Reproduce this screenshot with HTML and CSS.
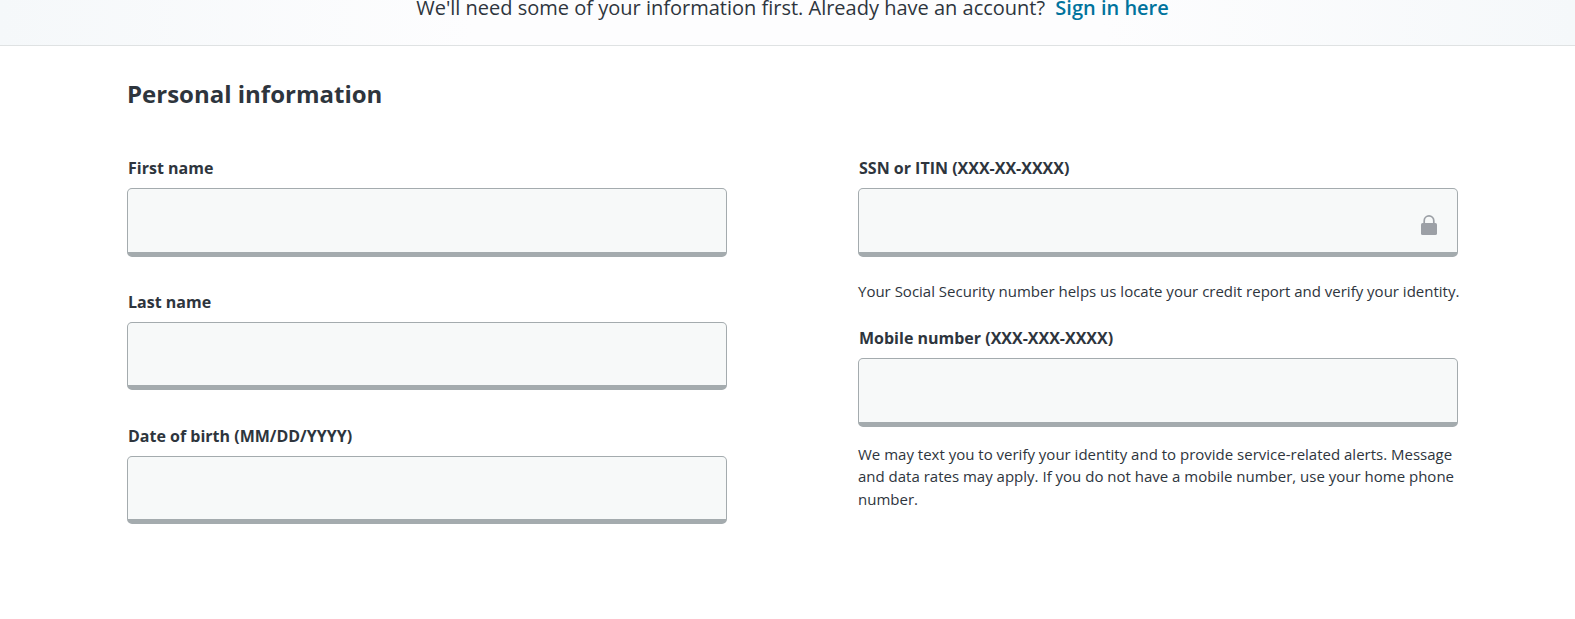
FILE: index.html
```html
<!DOCTYPE html>
<html lang="en">
<head>
  <meta charset="UTF-8" />
  <title>Personal information</title>
  <link rel="stylesheet" href="styles.css">
</head>
<body>
  <div class="banner">
    <p class="banner-text">We'll need some of your information first. Already have an account? <a href="#" class="signin">Sign in here</a></p>
  </div>

  <div class="content">
    <h2 class="section-title">Personal information</h2>

    <div class="columns">
      <div class="column">
        <div class="field">
          <label for="firstName">First name</label>
          <div class="input-wrap"><input type="text" id="firstName"></div>
        </div>
        <div class="field">
          <label for="lastName">Last name</label>
          <div class="input-wrap"><input type="text" id="lastName"></div>
        </div>
        <div class="field">
          <label for="dob">Date of birth (MM/DD/YYYY)</label>
          <div class="input-wrap"><input type="text" id="dob"></div>
        </div>
      </div>

      <div class="column">
        <div class="field field-ssn">
          <label for="ssn">SSN or ITIN (XXX-XX-XXXX)</label>
          <div class="input-wrap">
            <input type="text" id="ssn">
            <svg class="lock" viewBox="0 0 16 20" width="16" height="20" aria-hidden="true">
              <path d="M3.2 10V5.65a4.8 4.8 0 0 1 9.6 0V10" fill="none" stroke="#9ca0a6" stroke-width="1.7"/>
              <rect x="0" y="8" width="16" height="12" rx="1.6" fill="#9ca0a6"/>
            </svg>
          </div>
          <p class="help">Your Social Security number helps us locate your credit report and verify your identity.</p>
        </div>
        <div class="field">
          <label for="mobile">Mobile number (XXX-XXX-XXXX)</label>
          <div class="input-wrap"><input type="text" id="mobile"></div>
          <p class="help help-tight">We may text you to verify your identity and to provide service-related alerts. Message and data rates may apply. If you do not have a mobile number, use your home phone number.</p>
        </div>
      </div>
    </div>
  </div>
</body>
</html>
```

FILE: styles.css
```css
* {
  box-sizing: border-box;
}

body {
  margin: 0;
  font-family: 'Open Sans', sans-serif;
  background: #ffffff;
  color: #2e353d;
  overflow: hidden;
}

.banner {
  height: 46px;
  background: linear-gradient(90deg, #f5f8fa, #fdfdfe 30%, #fdfdfe 70%, #f5f8fa);
  border-bottom: 1px solid #dfe2e3;
  text-align: center;
}

.banner-text {
  margin: 0;
  padding-left: 10px;
  font-size: 20px;
  font-weight: 400;
  line-height: 15px;
}

.signin {
  margin-left: 5px;
  color: #00739d;
  font-weight: 600;
  text-decoration: none;
}

.content {
  padding: 30px 0 0 127px;
}

.section-title {
  margin: 0 0 44.9px;
  font-size: 24px;
  font-weight: 700;
  line-height: 36px;
}

.columns {
  display: grid;
  grid-template-columns: 600px 600px;
  column-gap: 131px;
}

.field {
  margin-bottom: 34.15px;
}

label {
  display: block;
  margin: 0 0 9px 1px;
  font-size: 16px;
  font-weight: 700;
  line-height: 22px;
}

.input-wrap {
  position: relative;
}

input {
  display: block;
  width: 100%;
  height: 68.7px;
  background: #f7f9f9;
  border: 1px solid #a4abae;
  border-bottom-width: 5px;
  border-radius: 5px;
}

.lock {
  position: absolute;
  right: 21px;
  top: 27px;
}

.help {
  margin: 23px -6px 0 0;
  font-size: 15px;
  line-height: 22.5px;
}

.help-tight {
  margin-top: 16px;
}

.field-ssn {
  margin-bottom: 25.1px;
}
```
